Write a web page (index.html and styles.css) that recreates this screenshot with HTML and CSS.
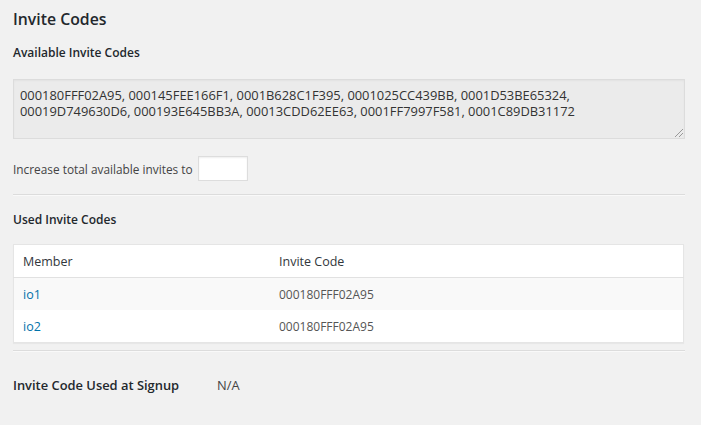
FILE: index.html
```html
<!DOCTYPE html>
<html>
<head>
<meta charset="utf-8">
<link rel="stylesheet" href="styles.css">
</head>
<body>
<div class="wrap">
  <h2 class="title">Invite Codes</h2>
  <h4 class="label">Available Invite Codes</h4>
  <div class="codes">000180FFF02A95, 000145FEE166F1, 0001B628C1F395, 0001025CC439BB, 0001D53BE65324, 00019D749630D6, 000193E645BB3A, 00013CDD62EE63, 0001FF7997F581, 0001C89DB31172<span class="grip"></span></div>
  <div class="increase">
    <span>Increase total available invites to</span>
    <span class="num"></span>
  </div>
  <div class="sep"></div>
  <h4 class="label used">Used Invite Codes</h4>
  <table class="tbl">
    <thead>
      <tr><th class="c1">Member</th><th>Invite Code</th></tr>
    </thead>
    <tbody>
      <tr class="alt"><td class="c1"><a href="#">io1</a></td><td class="code">000180FFF02A95</td></tr>
      <tr><td class="c1"><a href="#">io2</a></td><td class="code">000180FFF02A95</td></tr>
    </tbody>
  </table>
  <div class="sep sep2"></div>
  <div class="signup">
    <span class="slabel">Invite Code Used at Signup</span>
    <span class="sval">N/A</span>
  </div>
</div>
</body>
</html>
```

FILE: styles.css
```css
html, body {
  margin: 0;
  padding: 0;
  background: #f1f1f1;
}
body {
  font-family: "Open Sans", "Liberation Sans", sans-serif;
  color: #444;
  width: 701px;
  height: 425px;
  overflow: hidden;
}
.wrap {
  padding: 0 16px 0 13px;
}
.title {
  margin: 0;
  padding-top: 8px;
  font-size: 15.8px;
  font-weight: 600;
  line-height: 22px;
  color: #23282d;
}
.label {
  margin: 0;
  margin-top: 15px;
  font-size: 12px;
  font-weight: 600;
  line-height: 16px;
  color: #23282d;
}
.codes {
  position: relative;
  margin-top: 18px;
  height: 43px;
  padding: 7px 30px 8px 6px;
  background: #ebebeb;
  border: 1px solid #dcdcdc;
  box-shadow: inset 0 1px 2px rgba(0,0,0,0.04);
  font-size: 12.9px;
  line-height: 16px;
  color: #333;
}
.grip {
  position: absolute;
  right: 1px;
  bottom: 1px;
  width: 8px;
  height: 8px;
  background: linear-gradient(135deg, transparent 45%, #999 45%, #999 52%, transparent 52%, transparent 70%, #999 70%, #999 77%, transparent 77%);
}
.increase {
  display: flex;
  align-items: center;
  gap: 5px;
  margin-top: 17px;
  font-size: 11.85px;
  color: #444;
}
.num {
  display: inline-block;
  width: 48px;
  height: 23px;
  background: #fff;
  border: 1px solid #ddd;
  box-shadow: inset 0 1px 2px rgba(0,0,0,0.07);
}
.sep {
  margin-top: 13px;
  height: 0;
  border-top: 1px solid #dcdcdc;
  border-bottom: 1px solid #f9f9f9;
}
.label.used {
  margin-top: 16px;
}
.tbl {
  margin-top: 16px;
  width: 671px;
  border-collapse: collapse;
  background: #fff;
  border: 1px solid #e5e5e5;
  box-shadow: 0 1px 1px rgba(0,0,0,0.04);
  font-size: 12px;
}
.tbl th {
  text-align: left;
  font-weight: 400;
  color: #32373c;
  height: 32px;
  padding: 0 9px;
  border-bottom: 1px solid #e1e1e1;
  font-size: 12.5px;
}
.tbl td {
  height: 32px;
  padding: 0 9px;
  color: #555;
}
.tbl .c1 {
  width: 238px;
}
.tbl tr.alt td {
  background: #f9f9f9;
}
.tbl a {
  color: #0073aa;
  text-decoration: none;
  font-size: 12.5px;
}
.tbl .code {
  font-size: 12px;
}
.sep2 {
  margin-top: 7px;
}
.signup {
  display: flex;
  align-items: center;
  margin-top: 24px;
}
.slabel {
  width: 204px;
  font-size: 12.9px;
  font-weight: 600;
  color: #23282d;
}
.sval {
  font-size: 12.9px;
  color: #444;
}
```
